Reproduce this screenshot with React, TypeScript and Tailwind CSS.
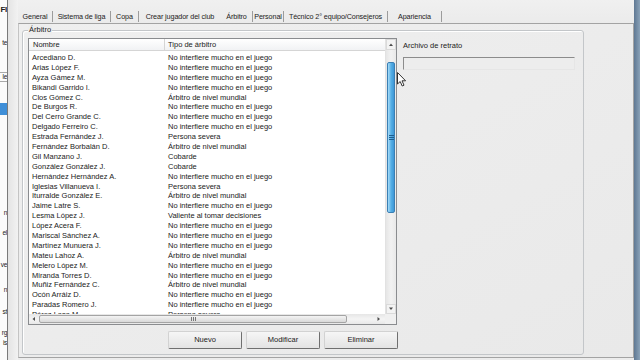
const rows: [string, string][] = [
  ["Arcediano D.", "No interfiere mucho en el juego"],
  ["Arias López F.", "No interfiere mucho en el juego"],
  ["Ayza Gámez M.", "No interfiere mucho en el juego"],
  ["Bikandi Garrido I.", "No interfiere mucho en el juego"],
  ["Clos Gómez C.", "Árbitro de nivel mundial"],
  ["De Burgos R.", "No interfiere mucho en el juego"],
  ["Del Cerro Grande C.", "No interfiere mucho en el juego"],
  ["Delgado Ferreiro C.", "No interfiere mucho en el juego"],
  ["Estrada Fernández J.", "Persona severa"],
  ["Fernández Borbalán D.", "Árbitro de nivel mundial"],
  ["Gil Manzano J.", "Cobarde"],
  ["González González J.", "Cobarde"],
  ["Hernández Hernández A.", "No interfiere mucho en el juego"],
  ["Iglesias Villanueva I.", "Persona severa"],
  ["Iturralde González E.", "Árbitro de nivel mundial"],
  ["Jaime Latre S.", "No interfiere mucho en el juego"],
  ["Lesma López J.", "Valiente al tomar decisiones"],
  ["López Acera F.", "No interfiere mucho en el juego"],
  ["Mariscal Sánchez A.", "No interfiere mucho en el juego"],
  ["Martínez Munuera J.", "No interfiere mucho en el juego"],
  ["Mateu Lahoz A.", "Árbitro de nivel mundial"],
  ["Melero López M.", "No interfiere mucho en el juego"],
  ["Miranda Torres D.", "No interfiere mucho en el juego"],
  ["Muñiz Fernández C.", "Árbitro de nivel mundial"],
  ["Ocón Arráiz D.", "No interfiere mucho en el juego"],
  ["Paradas Romero J.", "No interfiere mucho en el juego"],
  ["Pérez Lasa M.", "Persona severa"],
];

// width of each tab cell, and whether a separator follows it
const tabs: { label: string; w: number; sep: boolean }[] = [
  { label: "General", w: 35, sep: true },
  { label: "Sistema de liga", w: 58, sep: true },
  { label: "Copa", w: 28, sep: true },
  { label: "Crear jugador del club", w: 82, sep: false },
  { label: "Árbitro", w: 32, sep: true },
  { label: "Personal", w: 31, sep: true },
  { label: "Técnico 2° equipo/Consejeros", w: 104, sep: true },
  { label: "Apariencia", w: 54, sep: true },
];

const Frag = ({ h, text, bold }: { h: number; text?: string; bold?: boolean }) => (
  <div
    className={`flex justify-end items-center overflow-hidden whitespace-nowrap ${bold ? "font-bold text-[8px]" : ""}`}
    style={{ height: h }}
  >
    {text}
  </div>
);

const LeftStrip = () => (
  <div className="w-[18px] flex shrink-0">
    <div className="w-[7px] bg-[#fbfbfb] flex flex-col text-[6.5px] tracking-[-0.3px]">
      <Frag h={5} />
      <Frag h={10} text="FI" bold />
      <Frag h={23} />
      <Frag h={10} text="te" />
      <Frag h={24} />
      <div className="h-[10px] border-y border-[#a9a9a9] flex justify-end items-center overflow-hidden whitespace-nowrap">le</div>
      <Frag h={21} />
      <div className="h-[12px] bg-[#3f8fd8]" />
      <Frag h={93} />
      <Frag h={10} text="n" />
      <Frag h={10} />
      <Frag h={10} text="el" />
      <Frag h={22} />
      <Frag h={10} text="ve" />
      <Frag h={15} />
      <Frag h={10} text="n" />
      <Frag h={12} />
      <Frag h={10} text="st" />
      <Frag h={11} />
      <Frag h={10} text="rg" />
      <Frag h={10} text="is" />
    </div>
    <div className="w-px bg-[#7a7a7a]" />
    <div className="flex-1 bg-gradient-to-r from-[#e4e4e4] to-[#f2f2f2]" />
  </div>
);

const Arrow = ({ dir }: { dir: "up" | "down" | "left" | "right" }) => {
  const pts = {
    up: "1,4 3,1.5 5,4",
    down: "1,1.5 3,4 5,1.5",
    left: "4,1 1.5,3 4,5",
    right: "1.5,1 4,3 1.5,5",
  }[dir];
  return (
    <svg width="6" height="6" viewBox="0 0 6 6">
      <polygon points={pts} fill="#4d4d4d" />
    </svg>
  );
};

const ListBox = () => (
  <div className="w-[369px] h-[287px] border border-[#8a8c8f] bg-white flex flex-col">
    <div className="flex flex-1 min-h-0">
      <div className="flex-1 min-w-0 flex flex-col overflow-hidden">
        <div className="h-[12px] shrink-0 flex border-b border-[#d5d5d5] bg-gradient-to-b from-[#ffffff] to-[#f1f2f4] leading-[11px]">
          <div className="w-[136px] border-r border-[#d5d5d5] pl-[4px]">Nombre</div>
          <div className="pl-[3px]">Tipo de árbitro</div>
        </div>
        <div className="pt-[2px]">
          {rows.map(([n, t]) => (
            <div key={n} className="flex h-[9.9px] leading-[9.9px] whitespace-nowrap">
              <div className="w-[136px] pl-[3px]">{n}</div>
              <div className="pl-[3px]">{t}</div>
            </div>
          ))}
        </div>
      </div>
      {/* vertical scrollbar */}
      <div className="w-[11px] shrink-0 flex flex-col bg-gradient-to-r from-[#e6e6e6] via-[#f2f2f2] to-[#e9e9e9] border-l border-[#e2e2e2]">
        <div className="h-[11px] flex items-center justify-center border border-[#dadada] bg-[#f3f3f3]">
          <Arrow dir="up" />
        </div>
        <div className="h-[12px]" />
        <div className="h-[151px] mx-[1px] rounded-[2px] border border-[#3a7fb4] bg-gradient-to-r from-[#a6dcf8] via-[#56b0e6] to-[#3e97d6] flex flex-col items-center justify-center gap-[1px]">
          <div className="w-[5px] h-px bg-[#1f5e8f]" />
          <div className="w-[5px] h-px bg-[#1f5e8f]" />
          <div className="w-[5px] h-px bg-[#1f5e8f]" />
        </div>
        <div className="flex-1" />
        <div className="h-[10px] flex items-center justify-center border border-[#dadada] bg-[#f3f3f3]">
          <Arrow dir="down" />
        </div>
      </div>
    </div>
    {/* horizontal scrollbar */}
    <div className="h-[10px] shrink-0 flex">
      <div className="flex-1 flex items-center bg-gradient-to-b from-[#e6e6e6] via-[#f4f4f4] to-[#e8e8e8]">
        <div className="w-[10px] flex justify-center">
          <Arrow dir="left" />
        </div>
        <div className="w-[308px] h-[8px] rounded-[2px] border border-[#a4a4a4] bg-gradient-to-b from-[#f4f4f4] to-[#d9d9d9] flex items-center justify-center gap-[1px]">
          <div className="w-px h-[4px] bg-[#777]" />
          <div className="w-px h-[4px] bg-[#777]" />
          <div className="w-px h-[4px] bg-[#777]" />
        </div>
        <div className="flex-1 flex justify-end pr-[3px]">
          <Arrow dir="right" />
        </div>
      </div>
      <div className="w-[11px] bg-[#f0f0f0]" />
    </div>
  </div>
);

const Button = ({ label }: { label: string }) => (
  <div className="w-[74px] h-[18px] flex items-center justify-center rounded-[2px] border border-[#d2d2d2] border-r-[#6f6f6f] border-b-[#6f6f6f] bg-gradient-to-b from-[#f6f6f6] to-[#e3e3e3]">
    {label}
  </div>
);

export default function App() {
  return (
    <div className="relative w-[640px] h-[360px] overflow-hidden flex bg-[#ececec] text-[#222] text-[7.5px] font-['Liberation_Sans',Arial,sans-serif]">
      <LeftStrip />
      <div className="w-[616px] flex flex-col shrink-0">
        {/* tab strip */}
        <div className="h-[23px] shrink-0 pt-[11px] flex bg-gradient-to-b from-[#f0f0f0] to-[#ebebeb] text-[7.2px] tracking-[-0.1px]">
          {tabs.map((t) => (
            <div key={t.label} className="flex h-[11px]" style={{ width: t.w }}>
              <div className="flex-1 flex justify-center leading-[11px] whitespace-nowrap">
                {t.label}
              </div>
              {t.sep && <div className="w-px h-[11px] bg-[#9c9c9c]" />}
            </div>
          ))}
        </div>
        {/* tab page */}
        <div className="h-[335px] border border-[#a3a3a3] border-l-[#c4c4c4] pl-[3px] pt-[6px] bg-gradient-to-br from-[#efefef] via-[#ececec] to-[#e9e9e9]">
          <div className="relative w-[562px] h-[325px] rounded-[3px] border border-[#c3c6c9] shadow-[inset_1px_1px_0_#fff] pl-[5px] pt-[7px] flex">
            <div className="absolute left-[5px] top-[-6px] px-[1px] bg-[#ededed] leading-[10px]">Árbitro</div>
            <div className="flex flex-col">
              <ListBox />
              <div className="flex gap-[4px] pl-[140px] pt-[6px]">
                <Button label="Nuevo" />
                <Button label="Modificar" />
                <Button label="Eliminar" />
              </div>
            </div>
            <div className="pl-[5px] pt-[3px] flex flex-col">
              <div className="leading-[10px]">Archivo de retrato</div>
              <div className="mt-[6px] w-[172px] h-[13px] border-t border-l border-[#8c8c8c] border-r-[#e6e6e6] border-b-[#e6e6e6] border bg-[#ededed]" />
            </div>
          </div>
        </div>
      </div>
      <div className="flex-1 bg-gradient-to-r from-[#5f7893] to-[#8aa2b8]" />
      {/* mouse cursor over the page */}
      <svg className="absolute left-[397px] top-[72px]" width="10" height="15" viewBox="0 0 10 15">
        <path d="M0.5 0.5 L0.5 12 L3.2 9.5 L5.2 14 L7 13.2 L5 8.8 L8.6 8.8 Z" fill="#fff" stroke="#333" strokeWidth="1" strokeLinejoin="round" />
      </svg>
    </div>
  );
}
